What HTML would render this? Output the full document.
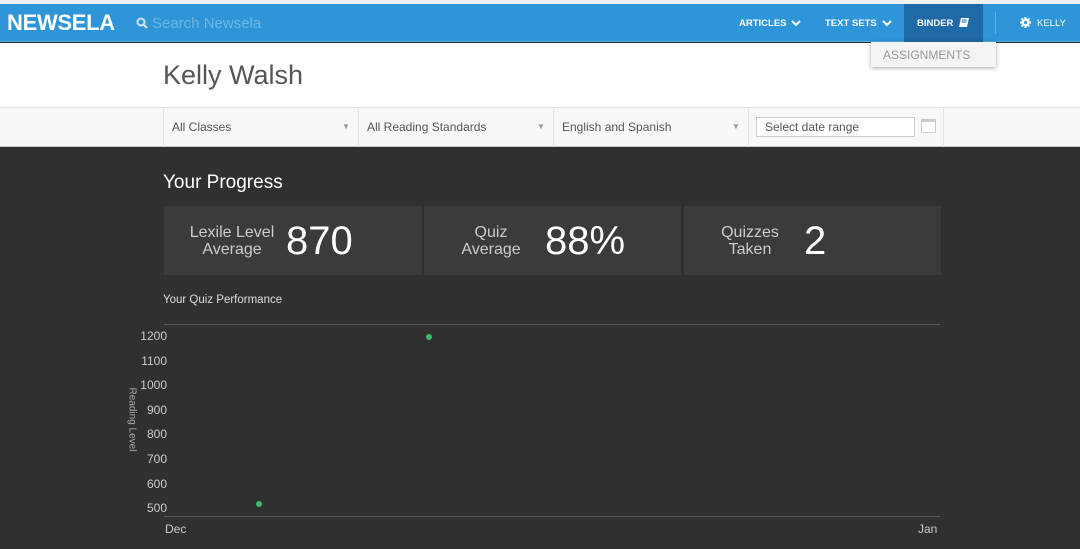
<!DOCTYPE html>
<html><head><style>
*{margin:0;padding:0;box-sizing:border-box}
body{width:1080px;height:549px;overflow:hidden;background:#303030;font-family:"Liberation Sans",sans-serif;position:relative}
.a{position:absolute}
</style></head><body>
<div class="a" style="left:0;top:0;width:1080px;height:4px;background:#eef0f3"></div>
<div class="a" style="left:0;top:4px;width:1080px;height:38px;background:#2e95d8;border-bottom:1px solid #5aa9dd"></div>
<div class="a" style="left:7px;top:10px;color:#fff;font-weight:bold;font-size:22px;letter-spacing:-0.3px">NEWSELA</div>
<svg class="a" style="left:136px;top:17px" width="12" height="12" viewBox="0 0 12 12"><circle cx="5" cy="5" r="3.5" fill="none" stroke="#cfe6f7" stroke-width="2"/><path d="M7.5 7.5L11 11" stroke="#cfe6f7" stroke-width="2.2"/></svg>
<div class="a" style="left:152px;top:15px;color:#6fb6e6;font-size:15px">Search Newsela</div>
<div class="a" style="left:739px;top:18px;color:#fff;font-weight:bold;font-size:9.5px">ARTICLES</div>
<svg class="a" style="left:791px;top:19px" width="10" height="8"><path d="M1 2l4 4 4-4" stroke="#fff" stroke-width="2" fill="none"/></svg>
<div class="a" style="left:825px;top:18px;color:#fff;font-weight:bold;font-size:9.5px">TEXT SETS</div>
<svg class="a" style="left:882px;top:19px" width="10" height="8"><path d="M1 2l4 4 4-4" stroke="#fff" stroke-width="2" fill="none"/></svg>
<div class="a" style="left:904px;top:4px;width:79px;height:38px;background:#1f69a6"></div>
<div class="a" style="left:917px;top:18px;color:#fff;font-weight:bold;font-size:9.5px">BINDER</div>
<svg class="a" style="left:958px;top:17px" width="12" height="11"><path d="M3 1h8l-2 9H1z" fill="#fff"/><path d="M4 3h5M3.5 5h5" stroke="#1f69a6"/></svg>
<div class="a" style="left:995px;top:12px;width:1px;height:22px;background:#5fb0e4"></div>
<svg class="a" style="left:1020px;top:17px" width="11" height="11" viewBox="0 0 11 11"><circle cx="5.5" cy="5.5" r="4" fill="#fff"/><path d="M5.5 0v11M0 5.5h11M1.6 1.6l7.8 7.8M9.4 1.6l-7.8 7.8" stroke="#fff" stroke-width="2"/><circle cx="5.5" cy="5.5" r="1.6" fill="#2e95d8"/></svg>
<div class="a" style="left:1037px;top:18px;color:#fff;font-size:9.5px">KELLY</div>
<div class="a" style="left:0;top:43px;width:1080px;height:65px;background:#fff;border-bottom:1px solid #e3e3e3"></div>
<div class="a" style="left:163px;top:60px;color:#555;font-size:27px">Kelly Walsh</div>
<div class="a" style="left:871px;top:42px;width:125px;height:25px;background:#f4f4f4;box-shadow:0 1px 4px rgba(0,0,0,.35)"></div>
<div class="a" style="left:883px;top:48px;color:#999;font-size:12px">ASSIGNMENTS</div>
<div class="a" style="left:0;top:108px;width:1080px;height:39px;background:#f8f8f8;border-bottom:1px solid #ccc"></div>
<div class="a" style="left:163px;top:108px;width:781px;height:39px;border-left:1px solid #e6e6e6;border-right:1px solid #e6e6e6"></div>
<div class="a" style="left:358px;top:108px;width:1px;height:39px;background:#e6e6e6"></div>
<div class="a" style="left:553px;top:108px;width:1px;height:39px;background:#e6e6e6"></div>
<div class="a" style="left:748px;top:108px;width:1px;height:39px;background:#e6e6e6"></div>
<div class="a" style="left:172px;top:120px;color:#555;font-size:12px">All Classes</div>
<div class="a" style="left:367px;top:120px;color:#555;font-size:12px">All Reading Standards</div>
<div class="a" style="left:562px;top:120px;color:#555;font-size:12px">English and Spanish</div>
<div class="a" style="left:342px;top:122px;color:#999;font-size:8px">▼</div>
<div class="a" style="left:537px;top:122px;color:#999;font-size:8px">▼</div>
<div class="a" style="left:732px;top:122px;color:#999;font-size:8px">▼</div>
<div class="a" style="left:756px;top:117px;width:159px;height:20px;background:#fff;border:1px solid #ccc"></div>
<div class="a" style="left:765px;top:120px;color:#555;font-size:12px">Select date range</div>
<div class="a" style="left:921px;top:119px;width:15px;height:14px;border:1px solid #ccc;border-top:3px solid #ccc;background:#fff"></div>
<div class="a" style="left:163px;top:172px;color:#fff;font-size:19px">Your Progress</div>
<div class="a" style="left:164px;top:206px;width:258px;height:69px;background:#3b3b3b"></div>
<div class="a" style="left:424px;top:206px;width:257px;height:69px;background:#3b3b3b"></div>
<div class="a" style="left:684px;top:206px;width:257px;height:69px;background:#3b3b3b"></div>
<div class="a" style="left:176px;top:224px;width:112px;text-align:center;color:#ccc;font-size:16px;line-height:17px">Lexile Level<br>Average</div>
<div class="a" style="left:286px;top:219px;color:#fff;font-size:40px">870</div>
<div class="a" style="left:455px;top:224px;width:72px;text-align:center;color:#ccc;font-size:16px;line-height:17px">Quiz<br>Average</div>
<div class="a" style="left:545px;top:219px;color:#fff;font-size:40px">88%</div>
<div class="a" style="left:714px;top:224px;width:72px;text-align:center;color:#ccc;font-size:16px;line-height:17px">Quizzes<br>Taken</div>
<div class="a" style="left:804px;top:219px;color:#fff;font-size:40px">2</div>
<div class="a" style="left:163px;top:294px;color:#ddd;font-size:11.5px">Your Quiz Performance</div>
<div class="a" style="left:164px;top:324px;width:776px;height:1px;background:#555"></div>
<div class="a" style="left:164px;top:516px;width:776px;height:1px;background:#555"></div>
<div class="a" style="left:120px;top:324px;width:47px;text-align:right;color:#ccc;font-size:12px;line-height:24.6px">1200<br>1100<br>1000<br>900<br>800<br>700<br>600<br>500</div>
<div class="a" style="left:97px;top:414px;width:70px;text-align:center;color:#aaa;font-size:10px;transform:rotate(90deg)">Reading Level</div>
<div class="a" style="left:426px;top:334px;width:6px;height:6px;border-radius:50%;background:#3dba6a"></div>
<div class="a" style="left:256px;top:501px;width:6px;height:6px;border-radius:50%;background:#3dba6a"></div>
<div class="a" style="left:165px;top:522px;color:#ccc;font-size:12px">Dec</div>
<div class="a" style="left:918px;top:522px;color:#ccc;font-size:12px">Jan</div>
</body></html>
